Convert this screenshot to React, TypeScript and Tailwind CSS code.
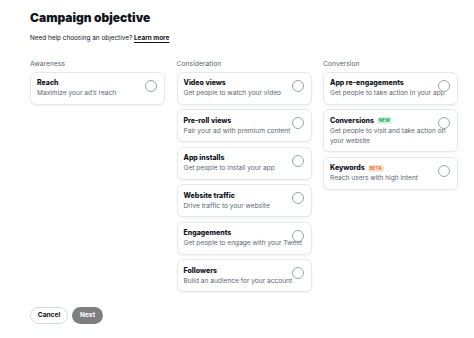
import React from "react";

type Item = { title: string; desc: string; badge?: "NEW" | "BETA" };

const cols: { label: string; items: Item[] }[] = [
  { label: "Awareness", items: [{ title: "Reach", desc: "Maximize your ad’s reach" }] },
  {
    label: "Consideration",
    items: [
      { title: "Video views", desc: "Get people to watch your video" },
      { title: "Pre-roll views", desc: "Pair your ad with premium content" },
      { title: "App installs", desc: "Get people to install your app" },
      { title: "Website traffic", desc: "Drive traffic to your website" },
      { title: "Engagements", desc: "Get people to engage with your Tweet" },
      { title: "Followers", desc: "Build an audience for your account" },
    ],
  },
  {
    label: "Conversion",
    items: [
      { title: "App re-engagements", desc: "Get people to take action in your app" },
      { title: "Conversions", desc: "Get people to visit and take action on your website", badge: "NEW" },
      { title: "Keywords", desc: "Reach users with high intent", badge: "BETA" },
    ],
  },
];

function Card({ item }: { item: Item }) {
  return (
    <div className="relative rounded-[6px] border border-[#e6e9ec] bg-white px-[6px] py-[5.5px] shadow-[0_1px_2px_rgba(0,0,0,0.06)]">
      <div className="flex items-center gap-[3px] text-[7px] font-extrabold leading-[10px] text-[#0f1419]">
        {item.title}
        {item.badge === "NEW" && (
          <span className="rounded-[2px] bg-[#d4f5e2] px-[2px] text-[4.5px] font-bold leading-[7px] text-[#17a05d]">NEW</span>
        )}
        {item.badge === "BETA" && (
          <span className="rounded-[2px] bg-[#fde3d2] px-[2px] text-[4.5px] font-bold leading-[7px] text-[#e4703a]">BETA</span>
        )}
      </div>
      <div className="text-[6.6px] leading-[10px] text-[#5b6670]">{item.desc}</div>
      <div className="absolute right-[7px] top-[7px] h-[12px] w-[12px] rounded-full border border-[#9aa4ad] bg-white" />
    </div>
  );
}

export default function App() {
  return (
    <div className="h-[338px] w-[474px] overflow-hidden bg-white pl-[30px] pt-[10px] font-['Inter',sans-serif]">
      <h1 className="text-[12px] font-black leading-[15px] text-[#0f1419]">Campaign objective</h1>
      <p className="mt-[8.5px] text-[6.4px] leading-[9px] text-[#0f1419]">
        Need help choosing an objective?{" "}
        <span className="font-bold underline underline-offset-[1.5px]">Learn more</span>
      </p>
      <div className="mt-[16px] grid w-[428px] grid-cols-3 gap-[11.5px]">
        {cols.map((c) => (
          <div key={c.label} className="flex flex-col">
            <div className="mb-[4px] text-[6.8px] leading-[9px] text-[#5b6670]">{c.label}</div>
            <div className="flex flex-col gap-[4.5px]">
              {c.items.map((it) => (
                <Card key={it.title} item={it} />
              ))}
            </div>
          </div>
        ))}
      </div>
      <div className="mt-[15px] flex gap-[4px]">
        <button className="h-[17px] w-[38px] rounded-full border border-[#cfd9de] bg-white text-[6.6px] font-bold text-[#0f1419]">
          Cancel
        </button>
        <button className="h-[17px] w-[31px] rounded-full bg-[#7c7e80] text-[6.6px] font-bold text-white">Next</button>
      </div>
    </div>
  );
}
